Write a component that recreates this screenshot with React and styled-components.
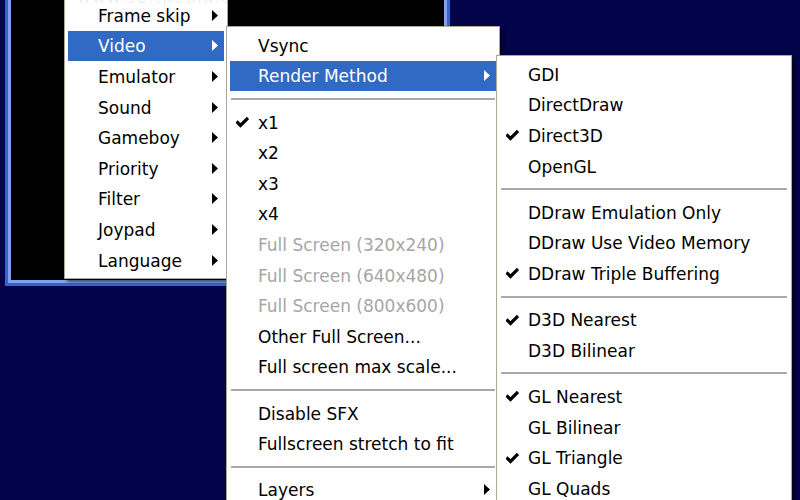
import React from 'react';
import styled, { createGlobalStyle } from 'styled-components';

const GlobalStyle = createGlobalStyle`
  html, body { margin: 0; padding: 0; }
  body {
    width: 800px;
    height: 500px;
    overflow: hidden;
    background: #03034a;
    font-family: "DejaVu Sans", Verdana, sans-serif;
  }
`;

const Desktop = styled.div`
  position: relative;
  width: 800px;
  height: 500px;
  overflow: hidden;
  background: #03034a;
`;

// emulator window behind the menus
const GameWindow = styled.div`
  position: absolute;
  left: 5px;
  top: -20px;
  width: 445px;
  height: 306px;
  box-sizing: border-box;
  background: #000;
  border: 3px solid #3a63c4;
  box-shadow: inset 0 0 0 3px #7ea3ea;
`;

const Menu = styled.div`
  position: absolute;
  left: ${p => p.$x}px;
  top: ${p => p.$y}px;
  width: ${p => p.$w}px;
  box-sizing: border-box;
  display: flex;
  flex-direction: column;
  padding: 3px;
  background: #fff;
  border: 1px solid #aca899;
  box-shadow: 3px 3px 3px rgba(0, 0, 0, 0.5);
`;

const Watermark = styled.span`
  position: absolute;
  left: 12px;
  top: -10px;
  font-size: 17px;
  color: rgba(0, 0, 0, 0.07);
  letter-spacing: 1px;
`;

const Item = styled.div`
  height: 30.6px;
  display: grid;
  grid-template-columns: ${p => p.$pad}px 1fr 18px;
  align-items: center;
  font-size: 17px;
  white-space: nowrap;
  color: ${p => (p.$active ? '#fff' : p.$disabled ? '#a6a6a6' : '#000')};
  background: ${p => (p.$active ? '#316ac5' : 'transparent')};
`;

const CheckCell = styled.span`
  display: flex;
  align-items: center;
  padding-left: 6px;
`;

const Label = styled.span`
  line-height: 1;
  padding-top: 2px;
`;

const ArrowCell = styled.span`
  display: flex;
  align-items: center;
  justify-content: center;
`;

const Separator = styled.div`
  height: 15.6px;
  display: flex;
  align-items: center;
  padding: 0 1px;

  &::after {
    content: '';
    flex: 1;
    height: 2px;
    background: #a9a9a9;
  }
`;

const Check = () => (
  <svg width="13" height="12" viewBox="0 0 13 12">
    <path d="M0.5 5.5 L4.5 9.5 L12 2" fill="none" stroke="#000" strokeWidth="3.2" />
  </svg>
);

const Arrow = ({ color }) => (
  <svg width="6" height="11" viewBox="0 0 6 11">
    <path d="M0 0 L6 5.5 L0 11 Z" fill={color} />
  </svg>
);

const mainItems = [
  { label: 'Frame skip', sub: true },
  { label: 'Video', sub: true, active: true },
  { label: 'Emulator', sub: true },
  { label: 'Sound', sub: true },
  { label: 'Gameboy', sub: true },
  { label: 'Priority', sub: true },
  { label: 'Filter', sub: true },
  { label: 'Joypad', sub: true },
  { label: 'Language', sub: true },
];

const videoItems = [
  { label: 'Vsync' },
  { label: 'Render Method', sub: true, active: true },
  '-',
  { label: 'x1', checked: true },
  { label: 'x2' },
  { label: 'x3' },
  { label: 'x4' },
  { label: 'Full Screen (320x240)', disabled: true },
  { label: 'Full Screen (640x480)', disabled: true },
  { label: 'Full Screen (800x600)', disabled: true },
  { label: 'Other Full Screen...' },
  { label: 'Full screen max scale...' },
  '-',
  { label: 'Disable SFX' },
  { label: 'Fullscreen stretch to fit' },
  '-',
  { label: 'Layers', sub: true },
];

const renderItems = [
  { label: 'GDI' },
  { label: 'DirectDraw' },
  { label: 'Direct3D', checked: true },
  { label: 'OpenGL' },
  '-',
  { label: 'DDraw Emulation Only' },
  { label: 'DDraw Use Video Memory' },
  { label: 'DDraw Triple Buffering', checked: true },
  '-',
  { label: 'D3D Nearest', checked: true },
  { label: 'D3D Bilinear' },
  '-',
  { label: 'GL Nearest', checked: true },
  { label: 'GL Bilinear' },
  { label: 'GL Triangle', checked: true },
  { label: 'GL Quads' },
];

const MenuItems = ({ items, pad = 28 }) =>
  items.map((it, i) =>
    it === '-' ? (
      <Separator key={i} />
    ) : (
      <Item key={i} $pad={pad} $active={it.active} $disabled={it.disabled}>
        <CheckCell>{it.checked && <Check />}</CheckCell>
        <Label>{it.label}</Label>
        <ArrowCell>{it.sub && <Arrow color={it.active ? '#fff' : '#000'} />}</ArrowCell>
      </Item>
    )
  );

export default function App() {
  return (
    <Desktop>
      <GlobalStyle />
      <GameWindow />
      <Menu $x={64} $y={-4} $w={164}>
        <Watermark>www.softpedia.com</Watermark>
        <MenuItems items={mainItems} pad={30} />
      </Menu>
      <Menu $x={226} $y={26} $w={274}>
        <MenuItems items={videoItems} />
      </Menu>
      <Menu $x={496} $y={55} $w={296}>
        <MenuItems items={renderItems} />
      </Menu>
    </Desktop>
  );
}
